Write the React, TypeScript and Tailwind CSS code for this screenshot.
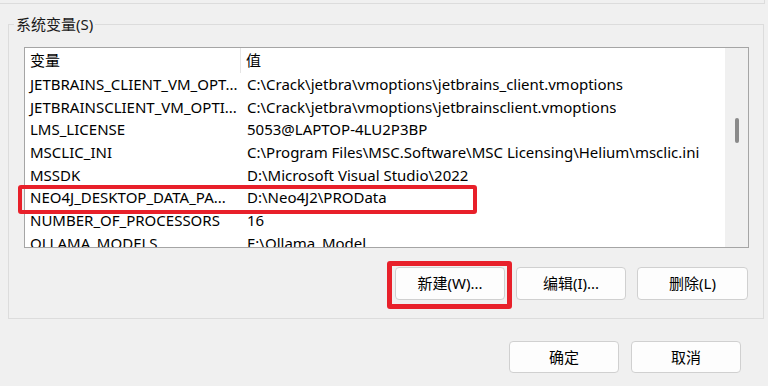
const ROWS = [
  ["JETBRAINS_CLIENT_VM_OPT...", "C:\\Crack\\jetbra\\vmoptions\\jetbrains_client.vmoptions"],
  ["JETBRAINSCLIENT_VM_OPTI...", "C:\\Crack\\jetbra\\vmoptions\\jetbrainsclient.vmoptions"],
  ["LMS_LICENSE", "5053@LAPTOP-4LU2P3BP"],
  ["MSCLIC_INI", "C:\\Program Files\\MSC.Software\\MSC Licensing\\Helium\\msclic.ini"],
  ["MSSDK", "D:\\Microsoft Visual Studio\\2022"],
  ["NEO4J_DESKTOP_DATA_PA...", "D:\\Neo4J2\\PROData"],
  ["NUMBER_OF_PROCESSORS", "16"],
  ["OLLAMA_MODELS", "E:\\Ollama_Model"],
];

function WinButton({ label, className = "" }: { label: string; className?: string }) {
  return (
    <button
      className={`flex items-center justify-center bg-[#fdfdfd] border border-[#d0d0d0] rounded-[4px] text-[15px] text-black ${className}`}
    >
      {label}
    </button>
  );
}

export default function App() {
  return (
    <div className="w-[768px] h-[386px] overflow-hidden bg-[#f0f0f0] text-[15px] text-black font-['Noto_Sans','Noto_Sans_CJK_SC',sans-serif]">
      {/* tail of the user variables group above */}
      <div className="h-[4px] w-[765px] border-b border-r border-[#dcdcdc]" />

      {/* system variables group */}
      <div className="relative mt-[20px] ml-[8px] w-[756px] h-[295px] border border-[#dcdcdc]">
        <span className="absolute -top-[12px] left-[5px] px-[2px] bg-[#f0f0f0] leading-[22px] text-[#1a1a1a]">
          系统变量(S)
        </span>

        <div className="mt-[22px] ml-[15px] w-[725px] h-[201px] border border-[#a5a5a5] bg-white flex overflow-hidden">
          <div className="w-[700px] flex flex-col">
            <div className="h-[25px] flex items-center shrink-0">
              <div className="w-[216px] h-full flex items-center pl-[5px] border-r border-[#e5e5e5]">变量</div>
              <div className="pl-[5px]">值</div>
            </div>
            {ROWS.map(([name, value]) => (
              <div key={name} className="h-[22.67px] shrink-0 flex items-center whitespace-nowrap">
                <div className="w-[216px] pl-[5px] overflow-hidden">{name}</div>
                <div className="pl-[6px] overflow-hidden">{value}</div>
              </div>
            ))}
          </div>
          <div className="w-[23px] bg-[#f0f0f0] pt-[70px] flex justify-center">
            <div className="w-[4px] h-[25px] rounded-full bg-[#8a8a8a]" />
          </div>
        </div>

        {/* highlight around NEO4J row */}
        <div className="absolute left-[9px] top-[160px] w-[459px] h-[29px] border-[4px] border-[#e8202a] rounded-[3px]" />

        <div className="mt-[19px] mr-[15px] flex justify-end gap-[11px]">
          <div className="relative">
            <WinButton label="新建(W)..." className="w-[110px] h-[33px]" />
            <div className="absolute -left-[8px] -top-[6px] -right-[7px] -bottom-[9px] border-[5px] border-[#e8202a] rounded-[3px]" />
          </div>
          <WinButton label="编辑(I)..." className="w-[110px] h-[33px]" />
          <WinButton label="删除(L)" className="w-[111px] h-[33px]" />
        </div>
      </div>

      <div className="mt-[22px] mr-[27px] flex justify-end gap-[12px]">
        <WinButton label="确定" className="w-[110px] h-[32px]" />
        <WinButton label="取消" className="w-[110px] h-[32px]" />
      </div>
    </div>
  );
}
